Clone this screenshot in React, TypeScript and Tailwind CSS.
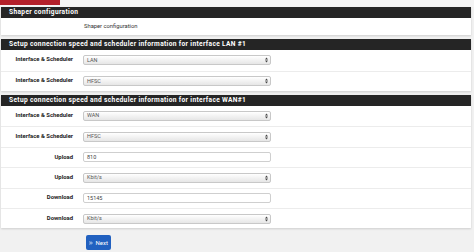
import type { ReactNode } from 'react'

const font = { fontFamily: 'Roboto, "Liberation Sans", sans-serif' }

function Header({ title }: { title: string }) {
  return (
    <div className="h-[11px] bg-[#252525] flex items-center pl-[8px] text-[6.6px] font-bold text-white tracking-[0.35px] leading-none">
      {title}
    </div>
  )
}

function SelectBox({ value }: { value: string }) {
  return (
    <div className="w-[188px] h-[10px] rounded-[2px] border border-[#c8c8c8] bg-gradient-to-b from-white to-[#e6e6e6] flex items-center justify-between pl-[3px] pr-[2px]">
      <span className="text-[5.5px] text-[#555] leading-none">{value}</span>
      <svg width="3" height="6" viewBox="0 0 3 6">
        <path d="M0 2.4 L1.5 0.4 L3 2.4 Z M0 3.6 L1.5 5.6 L3 3.6 Z" fill="#444" />
      </svg>
    </div>
  )
}

function InputBox({ value }: { value: string }) {
  return (
    <div className="w-[188px] h-[10px] rounded-[2px] border border-[#cfcfcf] bg-white flex items-center pl-[3px]">
      <span className="text-[5.5px] text-[#444] leading-none">{value}</span>
    </div>
  )
}

function Row({ label, first, h, children }: { label: string; first?: boolean; h: string; children: ReactNode }) {
  return (
    <div className={`${h} flex items-center ${first ? '' : 'border-t border-[#ececec]'}`}>
      <div className="w-[72px] text-right text-[5.9px] font-bold text-[#222] leading-none">{label}</div>
      <div className="ml-[10px]">{children}</div>
    </div>
  )
}

export default function App() {
  return (
    <div className="w-[474px] h-[252px] bg-[#f1f1f1] overflow-hidden" style={font}>
      <div className="h-[7px] bg-[#f4f4f4]">
        <div className="w-[60px] h-[5px] bg-[#b3202a]" />
      </div>

      <div className="ml-[1px] w-[470px] bg-white shadow-[0_1px_2px_rgba(0,0,0,0.15)]">
        <Header title="Shaper configuration" />
        <div className="h-[17px] flex items-center pl-[83px] text-[5.8px] text-[#333] leading-none">
          Shaper configuration
        </div>
      </div>

      <div className="mt-[4px] ml-[1px] w-[470px] bg-white shadow-[0_1px_2px_rgba(0,0,0,0.15)]">
        <Header title="Setup connection speed and scheduler information for interface LAN #1" />
        <Row label="Interface & Scheduler" first h="h-[20.5px]">
          <SelectBox value="LAN" />
        </Row>
        <Row label="Interface & Scheduler" h="h-[20.5px]">
          <SelectBox value="HFSC" />
        </Row>
      </div>

      <div className="mt-[4px] ml-[1px] w-[470px] bg-white shadow-[0_1px_2px_rgba(0,0,0,0.15)]">
        <Header title="Setup connection speed and scheduler information for interface WAN#1" />
        <Row label="Interface & Scheduler" first h="h-[20.4px]">
          <SelectBox value="WAN" />
        </Row>
        <Row label="Interface & Scheduler" h="h-[20.4px]">
          <SelectBox value="HFSC" />
        </Row>
        <Row label="Upload" h="h-[20.4px]">
          <InputBox value="810" />
        </Row>
        <Row label="Upload" h="h-[20.4px]">
          <SelectBox value="Kbit/s" />
        </Row>
        <Row label="Download" h="h-[20.4px]">
          <InputBox value="15145" />
        </Row>
        <Row label="Download" h="h-[20.4px]">
          <SelectBox value="Kbit/s" />
        </Row>
      </div>

      <div className="mt-[7px] ml-[86px]">
        <button className="w-[25px] h-[15px] rounded-[2px] bg-[#2261c0] flex items-center justify-center gap-[2.5px] text-white text-[6px] leading-none">
          <svg width="4" height="4" viewBox="0 0 4 4">
            <path d="M0.3 0.5 L1.6 2 L0.3 3.5 M2 0.5 L3.3 2 L2 3.5" stroke="white" strokeWidth="0.7" fill="none" />
          </svg>
          <span>Next</span>
        </button>
      </div>
    </div>
  )
}
